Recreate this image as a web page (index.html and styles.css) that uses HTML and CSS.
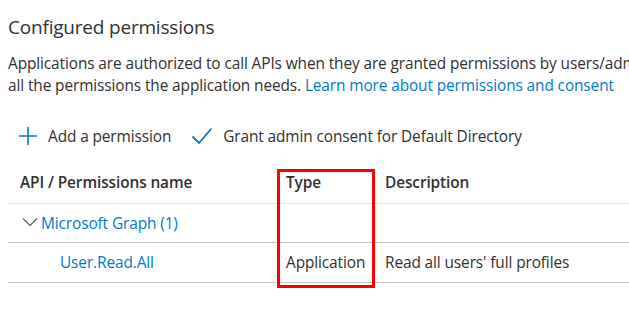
FILE: index.html
```html
<!DOCTYPE html>
<html>
<head>
<meta charset="utf-8">
<link rel="stylesheet" href="styles.css">
</head>
<body>
<div class="page">
  <h1 class="title">Configured permissions</h1>
  <p class="intro">
    <span class="line">Applications are authorized to call APIs when they are granted permissions by users/admins as part of the consent process.</span>
    <span class="line">all the permissions the application needs. <a class="link" href="#">Learn more about permissions and consent</a></span>
  </p>
  <div class="toolbar">
    <button class="tool">
      <svg class="icon" width="20" height="20" viewBox="0 0 20 20"><path d="M10 1v18M1 10h18" stroke="#0078d4" stroke-width="1.6" fill="none"/></svg>
      <span>Add a permission</span>
    </button>
    <button class="tool">
      <svg class="icon" width="22" height="20" viewBox="0 0 22 20"><path d="M1.5 10.5l6.5 6.5L20.5 2.5" stroke="#0078d4" stroke-width="1.8" fill="none"/></svg>
      <span>Grant admin consent for Default Directory</span>
    </button>
  </div>
  <div class="table">
    <div class="row head">
      <div class="cell name">API / Permissions name</div>
      <div class="cell type">Type</div>
      <div class="cell desc">Description</div>
    </div>
    <div class="row group">
      <div class="cell name">
        <svg class="chev" width="16" height="10" viewBox="0 0 16 10"><path d="M1 1.5l7 7 7-7" stroke="#605e5c" stroke-width="1.2" fill="none"/></svg>
        <a class="link" href="#">Microsoft Graph (1)</a>
      </div>
      <div class="cell type"></div>
      <div class="cell desc"></div>
    </div>
    <div class="row item">
      <div class="cell name"><a class="link perm" href="#">User.Read.All</a></div>
      <div class="cell type">Application</div>
      <div class="cell desc">Read all users' full profiles</div>
    </div>
  </div>
  <div class="highlight"></div>
</div>
</body>
</html>
```
FILE: styles.css
```css
html, body {
  margin: 0;
  padding: 0;
  background: #fff;
  overflow: hidden;
}
body {
  width: 629px;
  height: 314px;
  font-family: "Open Sans", "Noto Sans", sans-serif;
  color: #323130;
}
.page {
  position: relative;
  padding: 12px 0 0 8px;
  width: 800px;
}
.title {
  margin: 0;
  font-size: 19px;
  font-weight: 400;
  line-height: 30px;
  letter-spacing: -0.2px;
}
.intro {
  margin: 11px 0 0;
  font-size: 15.4px;
  line-height: 22px;
  letter-spacing: -0.1px;
}
.line {
  display: block;
  white-space: nowrap;
}
.link {
  color: #0078d4;
  text-decoration: none;
}
.toolbar {
  display: flex;
  align-items: center;
  gap: 10px;
  margin-top: 29px;
  height: 20px;
}
.tool {
  display: flex;
  align-items: center;
  gap: 10px;
  border: 0;
  background: none;
  padding: 0 0 0 10px;
  font: inherit;
  font-size: 15.4px;
  color: #323130;
  letter-spacing: -0.1px;
}
.table {
  margin-top: 18px;
  width: 640px;
  font-size: 15.4px;
  letter-spacing: -0.1px;
}
.row {
  display: flex;
  align-items: center;
  border-bottom: 1px solid #c8c6c4;
}
.row.head {
  height: 39px;
  font-weight: 600;
  border-bottom-color: #e6e4e2;
}
.row.head .cell {
  padding-bottom: 2px;
}
.row.group {
  height: 38px;
}
.row.item {
  height: 39px;
}
.cell {
  padding-left: 12px;
  white-space: nowrap;
}
.cell.name {
  width: 258px;
  display: flex;
  align-items: center;
}
.cell.type {
  width: 87px;
  padding-left: 8px;
}
.cell.desc {
  padding-left: 12px;
}
.group .cell.name {
  padding-left: 14px;
}
.chev {
  margin-right: 3px;
  margin-top: -2px;
}
.perm {
  padding-left: 40px;
}
.highlight {
  position: absolute;
  left: 277px;
  top: 169px;
  width: 92px;
  height: 113px;
  border: 3px solid #f00;
}
```
